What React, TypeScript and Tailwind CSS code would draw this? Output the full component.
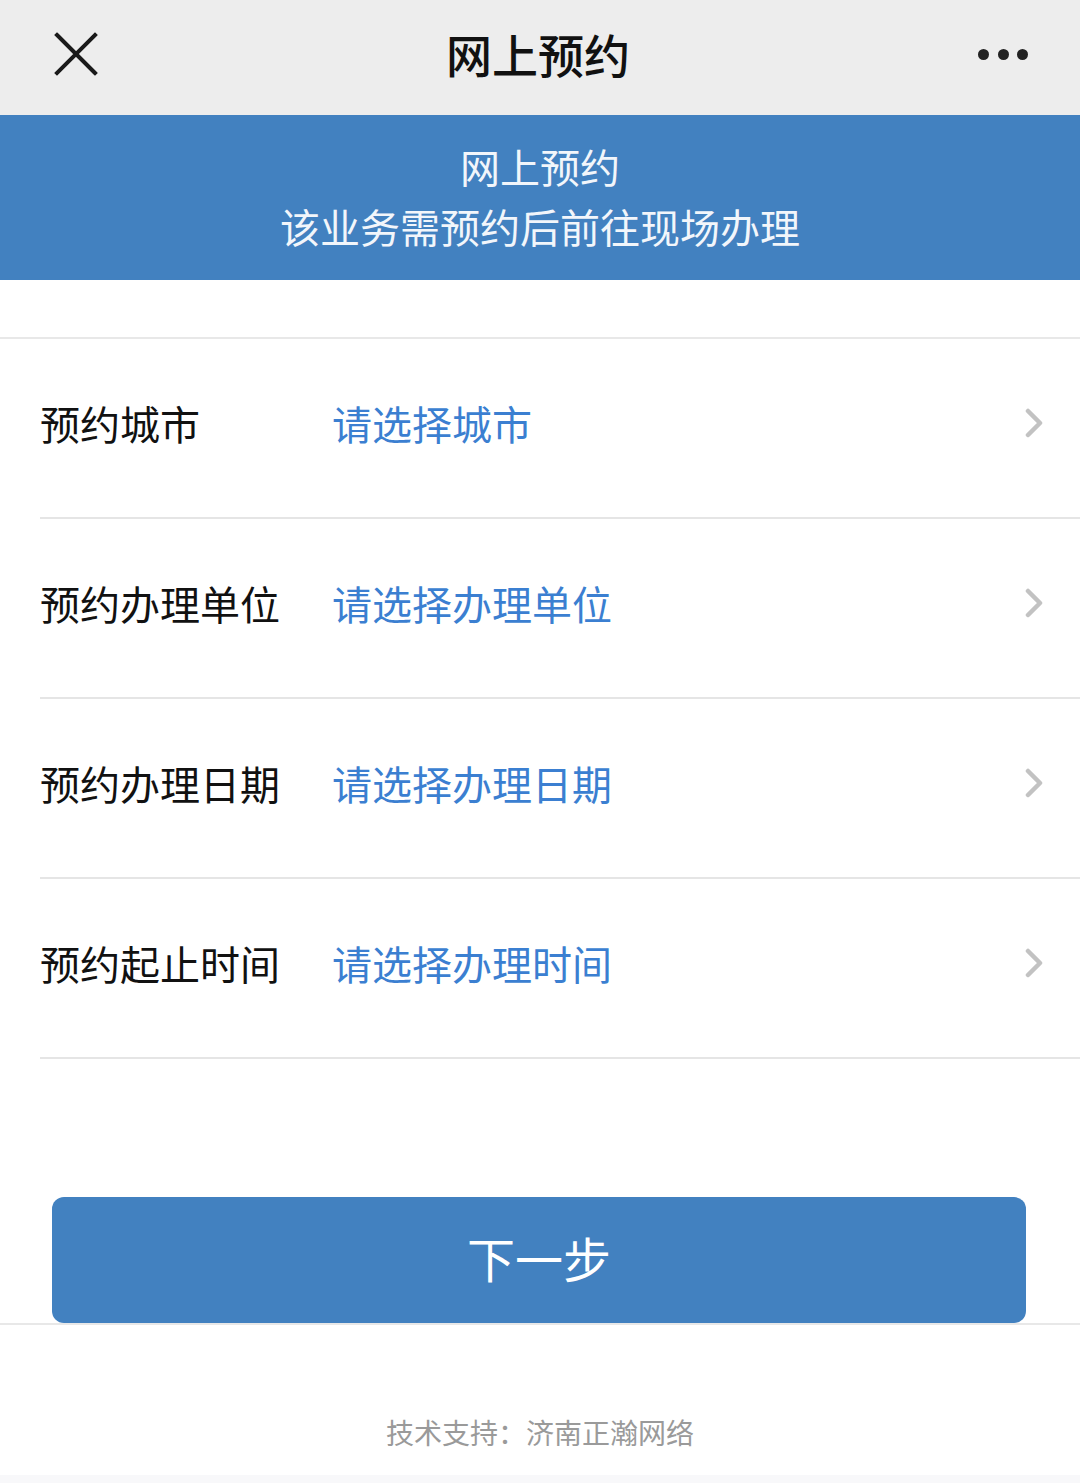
const rows = [
	{ label: '预约城市', value: '请选择城市' },
	{ label: '预约办理单位', value: '请选择办理单位' },
	{ label: '预约办理日期', value: '请选择办理日期' },
	{ label: '预约起止时间', value: '请选择办理时间' },
]

export default function App() {
	return (
		<div className="flex min-h-[1483px] w-[1080px] flex-col bg-white font-['Noto_Sans_CJK_SC',sans-serif]">
			{/* nav bar */}
			<div className="flex h-[115px] items-center justify-between bg-[#ededed] pl-[54px] pr-[52px]">
				<svg className="mt-[-8px] h-[44px] w-[44px]" viewBox="0 0 44 44" fill="none" stroke="#1a1a1a" strokeWidth="4" strokeLinecap="square">
					<path d="M3 3 L41 41 M41 3 L3 41" />
				</svg>
				<div className="mt-[-8px] text-[46px] font-medium text-[#111]">网上预约</div>
				<div className="mt-[-6px] flex w-[50px] items-center justify-between">
					<span className="h-[11px] w-[11px] rounded-full bg-[#222]" />
					<span className="h-[11px] w-[11px] rounded-full bg-[#222]" />
					<span className="h-[11px] w-[11px] rounded-full bg-[#222]" />
				</div>
			</div>

			{/* banner */}
			<div className="flex h-[165px] flex-col items-center justify-center gap-[4px] bg-[#4281c0] pb-[4px] text-[40px] leading-[56px] text-[#f2f6fb]">
				<div>网上预约</div>
				<div>该业务需预约后前往现场办理</div>
			</div>

			<div className="h-[57px]" />

			<div className="border-t-2 border-[#e8e8e8]">
				{rows.map(row => (
					<div key={row.label} className="ml-[40px] flex h-[180px] items-center border-b-2 border-[#e5e5e5] pb-[10px] pr-[36px]">
						<div className="w-[292px] text-[40px] text-[#111]">{row.label}</div>
						<div className="flex-1 text-[40px] text-[#3b7fd1]">{row.value}</div>
						<svg className="h-[30px] w-[20px]" viewBox="0 0 20 30" fill="none" stroke="#c2c2c2" strokeWidth="4.5" strokeLinecap="round" strokeLinejoin="round">
							<path d="M4 3 L16 15 L4 27" />
						</svg>
					</div>
				))}
			</div>

			<div className="h-[138px]" />

			<div className="border-b-2 border-[#e8e8e8]">
				<button className="mx-[52px] flex h-[126px] w-[974px] items-center justify-center rounded-[12px] bg-[#4281c0] pb-[6px] text-[48px] text-white">
					下一步
				</button>
			</div>

			<div className="flex h-[150px] items-end justify-center pb-[22px] text-[28px] text-[#9a9a9a]">技术支持：济南正瀚网络</div>
			<div className="flex-1 bg-[#f8f8fa]" />
		</div>
	)
}
